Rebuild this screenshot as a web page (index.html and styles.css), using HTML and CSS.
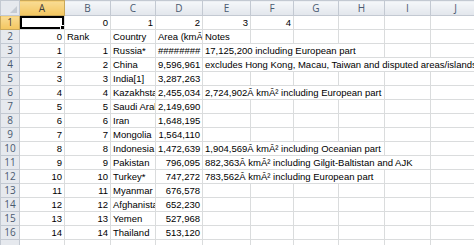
FILE: index.html
```html
<!DOCTYPE html>
<html lang="en">
<head>
    <meta charset="UTF-8">
    <title>Book1 - Sheet1</title>
    <link rel="stylesheet" href="styles.css">
</head>
<body>
    <table class="sheet">
        <colgroup>
            <col class="c-hdr">
            <col class="c-a"><col class="c-b"><col class="c-c"><col class="c-d"><col class="c-e">
            <col class="c-f"><col class="c-g"><col class="c-h"><col class="c-i"><col class="c-j">
        </colgroup>
        <thead>
            <tr>
                <th class="corner"><span class="tri"></span></th>
                <th class="col-hdr sel">A</th>
                <th class="col-hdr">B</th>
                <th class="col-hdr">C</th>
                <th class="col-hdr">D</th>
                <th class="col-hdr">E</th>
                <th class="col-hdr">F</th>
                <th class="col-hdr">G</th>
                <th class="col-hdr">H</th>
                <th class="col-hdr">I</th>
                <th class="col-hdr">J</th>
            </tr>
        </thead>
        <tbody>
            <tr>
                <th class="row-hdr sel">1</th>
                <td class="active"></td><td class="num">0</td><td class="num">1</td><td class="num">2</td><td class="num">3</td><td class="num">4</td>
                <td></td><td></td><td></td><td></td>
            </tr>
            <tr>
                <th class="row-hdr">2</th>
                <td class="num">0</td><td>Rank</td><td>Country</td><td>Area (kmÂ²)</td><td>Notes</td>
                <td></td><td></td><td></td><td></td><td></td>
            </tr>
            <tr>
                <th class="row-hdr">3</th>
                <td class="num">1</td><td class="num">1</td><td>Russia*</td><td class="num">########</td>
                <td colspan="4">17,125,200 including European part</td><td></td><td></td>
            </tr>
            <tr>
                <th class="row-hdr">4</th>
                <td class="num">2</td><td class="num">2</td><td>China</td><td class="num">9,596,961</td>
                <td colspan="6">excludes Hong Kong, Macau, Taiwan and disputed areas/islands</td>
            </tr>
            <tr>
                <th class="row-hdr">5</th>
                <td class="num">3</td><td class="num">3</td><td>India[1]</td><td class="num">3,287,263</td>
                <td></td><td></td><td></td><td></td><td></td><td></td>
            </tr>
            <tr>
                <th class="row-hdr">6</th>
                <td class="num">4</td><td class="num">4</td><td>Kazakhstan</td><td class="num">2,455,034</td>
                <td colspan="4">2,724,902Â kmÂ² including European part</td><td></td><td></td>
            </tr>
            <tr>
                <th class="row-hdr">7</th>
                <td class="num">5</td><td class="num">5</td><td>Saudi Arabia</td><td class="num">2,149,690</td>
                <td></td><td></td><td></td><td></td><td></td><td></td>
            </tr>
            <tr>
                <th class="row-hdr">8</th>
                <td class="num">6</td><td class="num">6</td><td>Iran</td><td class="num">1,648,195</td>
                <td></td><td></td><td></td><td></td><td></td><td></td>
            </tr>
            <tr>
                <th class="row-hdr">9</th>
                <td class="num">7</td><td class="num">7</td><td>Mongolia</td><td class="num">1,564,110</td>
                <td></td><td></td><td></td><td></td><td></td><td></td>
            </tr>
            <tr>
                <th class="row-hdr">10</th>
                <td class="num">8</td><td class="num">8</td><td>Indonesia</td><td class="num">1,472,639</td>
                <td colspan="4">1,904,569Â kmÂ² including Oceanian part</td><td></td><td></td>
            </tr>
            <tr>
                <th class="row-hdr">11</th>
                <td class="num">9</td><td class="num">9</td><td>Pakistan</td><td class="num">796,095</td>
                <td colspan="5">882,363Â kmÂ² including Gilgit-Baltistan and AJK</td><td></td>
            </tr>
            <tr>
                <th class="row-hdr">12</th>
                <td class="num">10</td><td class="num">10</td><td>Turkey*</td><td class="num">747,272</td>
                <td colspan="4">783,562Â kmÂ² including European part</td><td></td><td></td>
            </tr>
            <tr>
                <th class="row-hdr">13</th>
                <td class="num">11</td><td class="num">11</td><td>Myanmar</td><td class="num">676,578</td>
                <td></td><td></td><td></td><td></td><td></td><td></td>
            </tr>
            <tr>
                <th class="row-hdr">14</th>
                <td class="num">12</td><td class="num">12</td><td>Afghanistan</td><td class="num">652,230</td>
                <td></td><td></td><td></td><td></td><td></td><td></td>
            </tr>
            <tr>
                <th class="row-hdr">15</th>
                <td class="num">13</td><td class="num">13</td><td>Yemen</td><td class="num">527,968</td>
                <td></td><td></td><td></td><td></td><td></td><td></td>
            </tr>
            <tr>
                <th class="row-hdr">16</th>
                <td class="num">14</td><td class="num">14</td><td>Thailand</td><td class="num">513,120</td>
                <td></td><td></td><td></td><td></td><td></td><td></td>
            </tr>
            <tr>
                <th class="row-hdr"></th>
                <td></td><td></td><td></td><td></td><td></td><td></td><td></td><td></td><td></td><td></td>
            </tr>
        </tbody>
    </table>
</body>
</html>
```

FILE: styles.css
```css
body {
    margin: 0;
    background: #fff;
    overflow: hidden;
    font-family: "Liberation Sans", Arial, sans-serif;
}
.sheet {
    table-layout: fixed;
    border-collapse: collapse;
    width: 480px;
    font-size: 9.5px;
    color: #000;
}
.c-hdr { width: 19px; }
.c-a { width: 45px; }
.c-b { width: 46px; }
.c-c { width: 45px; }
.c-d { width: 47px; }
.c-e { width: 48px; }
.c-f { width: 43px; }
.c-g { width: 45px; }
.c-h { width: 46px; }
.c-i { width: 46px; }
.c-j { width: 50px; }

.sheet td {
    height: 13px;
    padding: 0 2px;
    border: 1px solid #dadcdd;
    white-space: nowrap;
    overflow: hidden;
    line-height: 13px;
    text-align: left;
}
.sheet td.num {
    text-align: right;
}
.sheet th {
    font-family: "Open Sans", "Liberation Sans", sans-serif;
    font-weight: normal;
    color: #4a5a70;
    padding: 0;
    white-space: nowrap;
    overflow: hidden;
}
.col-hdr {
    height: 14px;
    line-height: 14px;
    font-size: 10px;
    background: linear-gradient(#f5f7fa, #e2e6ec);
    border: 1px solid #c3c9d2;
    text-align: center;
}
.row-hdr {
    background: #e6e9ee;
    border: 1px solid #c3c9d2;
    text-align: center;
    line-height: 13px;
    font-size: 10px;
}
.corner {
    background: #e6e9ee;
    border: 1px solid #c3c9d2;
    position: relative;
}
.tri {
    position: absolute;
    right: 2px;
    bottom: 2px;
    width: 0;
    height: 0;
    border-left: 7px solid transparent;
    border-bottom: 7px solid #c5cbd3;
}
.sheet th.sel {
    background: linear-gradient(#f9dc94, #f3c65f);
    color: #3d3d3d;
    border-color: #c9a85a;
}
.sheet td.active {
    position: relative;
    box-shadow: inset 0 0 0 2px #000;
}
.sheet td.active::after {
    content: "";
    position: absolute;
    right: -3px;
    bottom: -3px;
    width: 5px;
    height: 5px;
    background: #000;
    border: 1px solid #fff;
    z-index: 2;
}
```
